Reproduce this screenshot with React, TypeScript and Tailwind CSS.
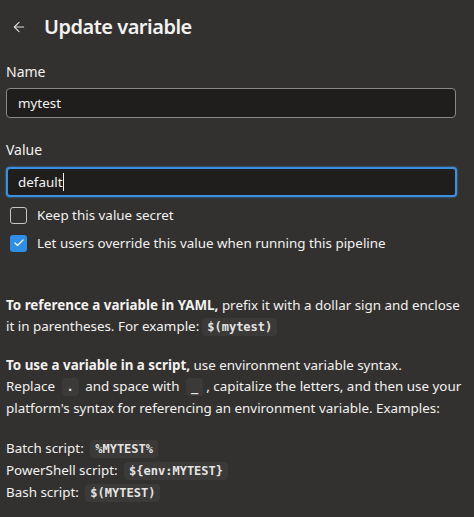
import { ArrowLeft, Check } from "lucide-react";

function Code({ children }: { children: React.ReactNode }) {
  return (
    <code className="mx-[3px] rounded-sm bg-[#3b3a39] px-[5px] py-[2px] font-['DejaVu_Sans_Mono',monospace] text-[12px] font-bold text-[#e4e4e4]">
      {children}
    </code>
  );
}

export default function App() {
  return (
    <div className="min-h-[517px] w-[474px] bg-[#323130] font-['Noto_Sans',sans-serif] text-[13.4px] text-[#f3f2f1]">
      <div className="flex h-[54px] items-center pl-[11px]">
        <ArrowLeft className="h-[16px] w-[16px] text-[#e0e0e0]" strokeWidth={1.6} />
        <h1 className="ml-[17px] text-[20px] font-semibold tracking-tight">Update variable</h1>
      </div>

      <div className="px-[6px]">
        <label className="mt-[8px] block text-[14px] leading-[20px]">Name</label>
        <div className="mt-[6px] flex h-[30px] w-[450px] items-center rounded-sm border border-[#8a8886] bg-[#1f1e1d] px-[11px]">
          mytest
        </div>

        <label className="mt-[22px] block text-[14px] leading-[20px]">Value</label>
        <div className="mt-[7px] flex h-[30px] w-[451px] items-center rounded-sm border-2 border-[#3b8ee0] bg-[#1f1e1d] px-[10px] shadow-[0_0_2px_#3b8ee0]">
          default<span className="ml-[1px] h-[18px] w-px bg-[#f3f2f1]" />
        </div>

        <div className="mt-[8px] flex h-[20px] items-center pl-[4px]">
          <span className="h-[17px] w-[17px] rounded-[3px] border border-[#c8c6c4]" />
          <span className="ml-[10px]">Keep this value secret</span>
        </div>
        <div className="mt-[8px] flex h-[20px] items-center pl-[4px]">
          <span className="flex h-[17px] w-[17px] items-center justify-center rounded-[3px] bg-[#2f8ee8]">
            <Check className="h-[12px] w-[12px] text-white" strokeWidth={2.5} />
          </span>
          <span className="ml-[10px]">Let users override this value when running this pipeline</span>
        </div>

        <div className="mt-[42px] leading-[21px]">
          <p>
            <b>To reference a variable in YAML,</b> prefix it with a dollar sign and enclose it in parentheses. For example:
            <Code>$(mytest)</Code>
          </p>

          <p className="mt-[17px]">
            <b>To use a variable in a script,</b> use environment variable syntax.
            <br />
            Replace <Code>.</Code> and space with <Code>_</Code>, capitalize the letters, and then use your platform's
            syntax for referencing an environment variable. Examples:
          </p>

          <p className="mt-[19px]">
            Batch script: <Code>%MYTEST%</Code>
            <br />
            PowerShell script: <Code>{"${env:MYTEST}"}</Code>
            <br />
            Bash script: <Code>$(MYTEST)</Code>
          </p>
        </div>
      </div>
    </div>
  );
}
